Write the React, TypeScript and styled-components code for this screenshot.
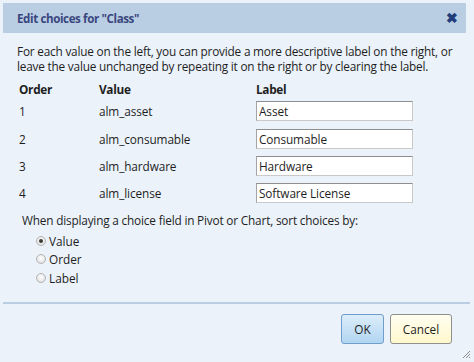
import React from "react";
import styled, { createGlobalStyle } from "styled-components";

const Global = createGlobalStyle`
  html, body { margin: 0; padding: 0; background: #ebf2fa; }
  body { font-family: "Open Sans", "Noto Sans", sans-serif; }
`;

const Dialog = styled.div`
  position: relative;
  width: 474px;
  height: 362px;
  box-sizing: border-box;
  padding: 3px 0 0 3px;
  background: #ebf2fa;
  overflow: hidden;
  display: flex;
  flex-direction: column;
  color: #1e1e1e;
  font-size: 12px;
`;

const TitleBar = styled.div`
  height: 30px;
  width: 463px;
  background: #b9cee2;
  display: flex;
  align-items: center;
  justify-content: space-between;
  padding: 0 8px 0 14px;
  box-sizing: border-box;
`;

const Title = styled.span`
  font-weight: 700;
  font-size: 11.6px;
  letter-spacing: -0.4px;
  color: #3a4780;
`;

const Close = styled.span`
  font-size: 14px;
  font-weight: 700;
  color: #213d7a;
  line-height: 1;
`;

const Body = styled.div`
  padding: 11px 0 0 14px;
  display: flex;
  flex-direction: column;
`;

const Intro = styled.p`
  margin: 0;
  line-height: 15px;
  font-size: 11.8px;
  letter-spacing: -0.2px;
`;

const Table = styled.div`
  display: grid;
  grid-template-columns: 80px 157px 157px;
  grid-template-rows: 10px repeat(4, 20px);
  row-gap: 7.3px;
  align-items: center;
  margin: 10px 0 0 2px;
`;

const Head = styled.div`
  font-weight: 700;
  font-size: 11.8px;
  letter-spacing: -0.3px;
  line-height: 10px;
`;

const Cell = styled.div`
  font-size: 11.8px;
  letter-spacing: -0.1px;
`;

const TextInput = styled.input`
  box-sizing: border-box;
  width: 157px;
  height: 20px;
  margin: 0;
  padding: 0 2px;
  border: 1px solid #c9c9c9;
  border-top-color: #8e8e8e;
  border-left-color: #a4a4a4;
  background: #fff;
  font-family: "Open Sans", sans-serif;
  font-size: 11.8px;
  letter-spacing: -0.1px;
  color: #1e1e1e;
  outline: none;
`;

const SortText = styled.div`
  margin: 10px 0 0 5px;
  font-size: 11.8px;
  letter-spacing: -0.18px;
  line-height: 15px;
`;

const Radios = styled.div`
  display: flex;
  flex-direction: column;
  margin: 5px 0 0 19px;
  gap: 3.5px;
`;

const RadioRow = styled.label`
  display: flex;
  align-items: center;
  gap: 3px;
  height: 15px;
  font-size: 11.8px;
`;

const RadioDot = styled.span<{ $checked?: boolean }>`
  width: 10px;
  height: 10px;
  border-radius: 50%;
  box-sizing: border-box;
  border: 1px solid #b4b4b4;
  background: radial-gradient(circle at 50% 40%, #ffffff 0%, #e4e4e4 70%, #d0d0d0 100%);
  display: flex;
  align-items: center;
  justify-content: center;
  &::after {
    content: "";
    width: 4px;
    height: 4px;
    border-radius: 50%;
    background: ${(p) => (p.$checked ? "#3c3c3c" : "transparent")};
  }
`;

const Spacer = styled.div`
  height: 17px;
`;

const Separator = styled.div`
  margin: 0 4px 0 0;
  height: 2px;
  background: #b9cee2;
`;

const Footer = styled.div`
  display: flex;
  justify-content: flex-end;
  gap: 6px;
  padding: 10px 22px 0 0;
`;

const Button = styled.button<{ $primary?: boolean }>`
  height: 30px;
  padding: 0;
  width: ${(p) => (p.$primary ? "43px" : "62px")};
  border-radius: 3px;
  border: 1px solid ${(p) => (p.$primary ? "#6f9dcc" : "#8f8f8f")};
  background: ${(p) =>
    p.$primary
      ? "linear-gradient(#dcedfa, #b2d5f2)"
      : "linear-gradient(#fffef0, #fff8cc)"};
  font-family: "Open Sans", sans-serif;
  font-size: 11.8px;
  color: #1e1e1e;
`;

const Grip = styled.svg`
  position: absolute;
  right: 3px;
  bottom: 3px;
`;

const rows = [
  ["1", "alm_asset", "Asset"],
  ["2", "alm_consumable", "Consumable"],
  ["3", "alm_hardware", "Hardware"],
  ["4", "alm_license", "Software License"],
];

export default function App() {
  return (
    <>
      <Global />
      <Dialog>
        <TitleBar>
          <Title>Edit choices for "Class"</Title>
          <Close>✖</Close>
        </TitleBar>
        <Body>
          <Intro>
            For each value on the left, you can provide a more descriptive label on the right, or
            <br />
            leave the value unchanged by repeating it on the right or by clearing the label.
          </Intro>
          <Table>
            <Head>Order</Head>
            <Head>Value</Head>
            <Head>Label</Head>
            {rows.map(([o, v, l]) => (
              <React.Fragment key={o}>
                <Cell>{o}</Cell>
                <Cell>{v}</Cell>
                <TextInput defaultValue={l} />
              </React.Fragment>
            ))}
          </Table>
          <SortText>When displaying a choice field in Pivot or Chart, sort choices by:</SortText>
          <Radios>
            <RadioRow>
              <RadioDot $checked />
              Value
            </RadioRow>
            <RadioRow>
              <RadioDot />
              Order
            </RadioRow>
            <RadioRow>
              <RadioDot />
              Label
            </RadioRow>
          </Radios>
        </Body>
        <Spacer />
        <Separator />
        <Footer>
          <Button $primary>OK</Button>
          <Button>Cancel</Button>
        </Footer>
        <Grip width="10" height="10" viewBox="0 0 10 10">
          <line x1="9" y1="2" x2="2" y2="9" stroke="#8a8a8a" strokeWidth="1" />
          <line x1="9" y1="5" x2="5" y2="9" stroke="#8a8a8a" strokeWidth="1" />
          <line x1="9" y1="8" x2="8" y2="9" stroke="#8a8a8a" strokeWidth="1" />
        </Grip>
      </Dialog>
    </>
  );
}
